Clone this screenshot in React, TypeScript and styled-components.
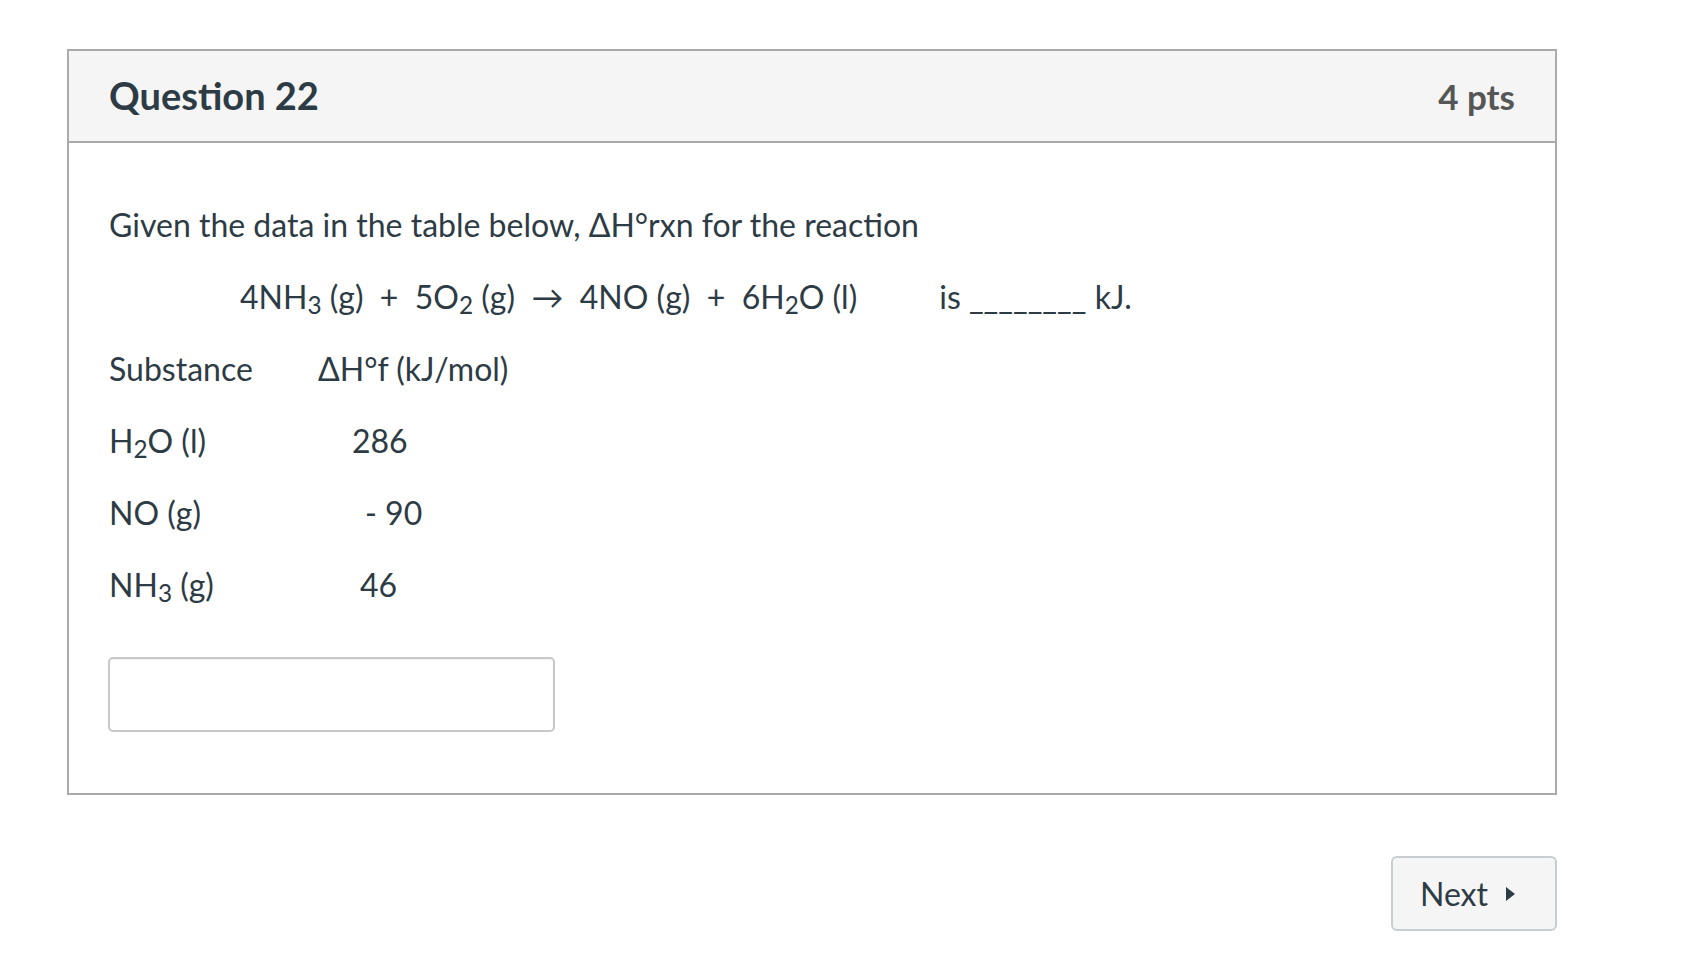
import styled, { createGlobalStyle } from 'styled-components';

const GlobalStyle = createGlobalStyle`
  html, body {
    margin: 0;
    padding: 0;
    background: #ffffff;
  }
  body {
    font-family: Lato, "Liberation Sans", sans-serif;
    color: #2d3b45;
  }
`;

const Page = styled.div`
  width: 1490px;
  padding: 49px 0 0 67px;
  display: flex;
  flex-direction: column;
`;

const Card = styled.section`
  border: 2px solid #aaaaaa;
  background: #ffffff;
`;

const Header = styled.header`
  display: flex;
  justify-content: space-between;
  align-items: baseline;
  background: #f5f5f5;
  border-bottom: 2px solid #aaaaaa;
  padding: 22px 40px 22px 40px;
`;

const Title = styled.h2`
  margin: 0;
  font-size: 38px;
  line-height: 45px;
  font-weight: 700;
  color: #2d3b45;
`;

const Points = styled.span`
  font-size: 35px;
  line-height: 45px;
  font-weight: 700;
  color: #565656;
`;

const Body = styled.div`
  padding: 59px 40px 61px 40px;
`;

const Line = styled.p<{ $indent?: number }>`
  margin: 0 0 27px;
  padding-left: ${p => p.$indent ?? 0}px;
  font-size: 32px;
  line-height: 45px;
  white-space: pre;
`;

const Sub = styled.sub`
  font-size: 0.76em;
  line-height: 0;
  vertical-align: -0.22em;
`;

const Tail = styled.span`
  margin-left: 82px;
`;

const Row = styled.div`
  display: grid;
  grid-template-columns: 209px auto;
  margin: 0 0 27px;
  font-size: 32px;
  line-height: 45px;
`;

const Cell = styled.span<{ $indent?: number }>`
  padding-left: ${p => p.$indent ?? 0}px;
  white-space: pre;
`;

const AnswerInput = styled.input`
  display: block;
  box-sizing: border-box;
  width: 447px;
  height: 75px;
  margin: 50px 0 0 -1px;
  border: 2px solid #c8c8c8;
  border-radius: 5px;
  box-shadow: inset 0 1px 2px rgba(0, 0, 0, 0.06);
  font: inherit;
  font-size: 32px;
  padding: 0 14px;
  outline: none;
`;

const Footer = styled.div`
  display: flex;
  justify-content: flex-end;
  padding-top: 61px;
`;

const NextButton = styled.button`
  display: flex;
  align-items: center;
  gap: 17px;
  box-sizing: border-box;
  height: 75px;
  width: 166px;
  padding: 0 0 0 27px;
  background: #f5f5f5;
  border: 2px solid #c7cdd1;
  border-radius: 6px;
  font-family: Lato, "Liberation Sans", sans-serif;
  font-size: 32px;
  color: #2d3b45;
  cursor: pointer;
`;

const Caret = styled.svg`
  width: 10px;
  height: 14px;
  fill: #2d3b45;
`;

const rows = [
  { name: <>H<Sub>2</Sub>O (l)</>, value: '286', indent: 34 },
  { name: <>NO (g)</>, value: '- 90', indent: 47 },
  { name: <>NH<Sub>3</Sub> (g)</>, value: '46', indent: 42 },
];

export default function App() {
  return (
    <>
      <GlobalStyle />
      <Page>
        <Card>
          <Header>
            <Title>Question 22</Title>
            <Points>4 pts</Points>
          </Header>
          <Body>
            <Line>Given the data in the table below, ΔH°rxn for the reaction</Line>
            <Line $indent={131}>
              4NH<Sub>3</Sub> (g)  +  5O<Sub>2</Sub> (g)  →  4NO (g)  +  6H<Sub>2</Sub>O (l)
              <Tail>is ________ kJ.</Tail>
            </Line>
            <Row>
              <Cell>Substance</Cell>
              <Cell>ΔH°f (kJ/mol)</Cell>
            </Row>
            {rows.map((r, i) => (
              <Row key={i}>
                <Cell>{r.name}</Cell>
                <Cell $indent={r.indent}>{r.value}</Cell>
              </Row>
            ))}
            <AnswerInput type="text" aria-label="answer" />
          </Body>
        </Card>
        <Footer>
          <NextButton>
            Next
            <Caret viewBox="0 0 10 14">
              <path d="M1 0 L10 7 L1 14 Z" />
            </Caret>
          </NextButton>
        </Footer>
      </Page>
    </>
  );
}
